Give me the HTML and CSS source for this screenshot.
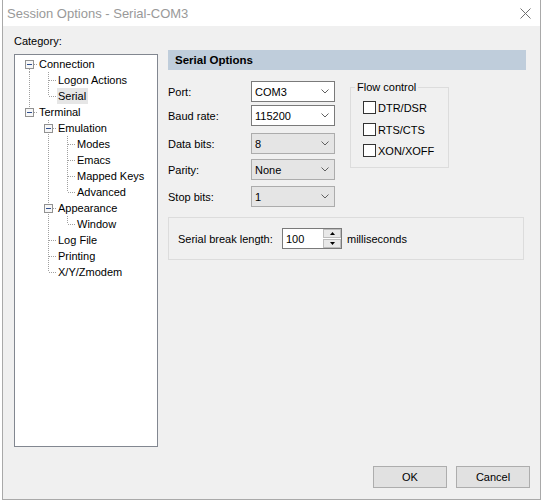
FILE: index.html
```html
<!DOCTYPE html>
<html>
<head>
<meta charset="utf-8">
<title>Session Options - Serial-COM3</title>
<link rel="stylesheet" href="styles.css">
</head>
<body>
<div class="window">
  <div class="titlebar">
    <span class="title">Session Options - Serial-COM3</span>
    <svg class="close" width="11" height="11" viewBox="0 0 11 11"><path d="M0.5 0.5L10.5 10.5M10.5 0.5L0.5 10.5" stroke="#707070" stroke-width="1" fill="none"/></svg>
  </div>
  <div class="main">
    <div class="panes">
      <div class="left">
        <div class="cat-label">Category:</div>
        <div class="tree">
          <div class="row"><svg width="18" height="16"><path d="M9.5 13V16" stroke="#a0a0a0" stroke-dasharray="1 1"/><path d="M14 8.5H18" stroke="#a0a0a0" stroke-dasharray="1 1"/><rect x="5.5" y="4.5" width="8" height="8" fill="#f7f7f7" stroke="#919191"/><path d="M7 8.5H12" stroke="#2f4f8f"/></svg><span>Connection</span></div>
          <div class="row"><svg width="37" height="16"><path d="M9.5 0V16M28.5 0V16" stroke="#a0a0a0" stroke-dasharray="1 1"/><path d="M29 8.5H37" stroke="#a0a0a0" stroke-dasharray="1 1"/></svg><span>Logon Actions</span></div>
          <div class="row"><svg width="37" height="16"><path d="M9.5 0V16M28.5 0V8" stroke="#a0a0a0" stroke-dasharray="1 1"/><path d="M29 8.5H37" stroke="#a0a0a0" stroke-dasharray="1 1"/></svg><span class="sel">Serial</span></div>
          <div class="row"><svg width="18" height="16"><path d="M9.5 0V4" stroke="#a0a0a0" stroke-dasharray="1 1"/><path d="M14 8.5H18" stroke="#a0a0a0" stroke-dasharray="1 1"/><rect x="5.5" y="4.5" width="8" height="8" fill="#f7f7f7" stroke="#919191"/><path d="M7 8.5H12" stroke="#2f4f8f"/></svg><span>Terminal</span></div>
          <div class="row"><svg width="37" height="16"><path d="M28.5 0V16" stroke="#a0a0a0" stroke-dasharray="1 1"/><path d="M33 8.5H37" stroke="#a0a0a0" stroke-dasharray="1 1"/><rect x="24.5" y="4.5" width="8" height="8" fill="#f7f7f7" stroke="#919191"/><path d="M26 8.5H31" stroke="#2f4f8f"/></svg><span>Emulation</span></div>
          <div class="row"><svg width="56" height="16"><path d="M28.5 0V16M47.5 0V16" stroke="#a0a0a0" stroke-dasharray="1 1"/><path d="M48 8.5H56" stroke="#a0a0a0" stroke-dasharray="1 1"/></svg><span>Modes</span></div>
          <div class="row"><svg width="56" height="16"><path d="M28.5 0V16M47.5 0V16" stroke="#a0a0a0" stroke-dasharray="1 1"/><path d="M48 8.5H56" stroke="#a0a0a0" stroke-dasharray="1 1"/></svg><span>Emacs</span></div>
          <div class="row"><svg width="56" height="16"><path d="M28.5 0V16M47.5 0V16" stroke="#a0a0a0" stroke-dasharray="1 1"/><path d="M48 8.5H56" stroke="#a0a0a0" stroke-dasharray="1 1"/></svg><span>Mapped Keys</span></div>
          <div class="row"><svg width="56" height="16"><path d="M28.5 0V16M47.5 0V8" stroke="#a0a0a0" stroke-dasharray="1 1"/><path d="M48 8.5H56" stroke="#a0a0a0" stroke-dasharray="1 1"/></svg><span>Advanced</span></div>
          <div class="row"><svg width="37" height="16"><path d="M28.5 0V16" stroke="#a0a0a0" stroke-dasharray="1 1"/><path d="M33 8.5H37" stroke="#a0a0a0" stroke-dasharray="1 1"/><rect x="24.5" y="4.5" width="8" height="8" fill="#f7f7f7" stroke="#919191"/><path d="M26 8.5H31" stroke="#2f4f8f"/></svg><span>Appearance</span></div>
          <div class="row"><svg width="56" height="16"><path d="M28.5 0V16M47.5 0V8" stroke="#a0a0a0" stroke-dasharray="1 1"/><path d="M48 8.5H56" stroke="#a0a0a0" stroke-dasharray="1 1"/></svg><span>Window</span></div>
          <div class="row"><svg width="37" height="16"><path d="M28.5 0V16" stroke="#a0a0a0" stroke-dasharray="1 1"/><path d="M29 8.5H37" stroke="#a0a0a0" stroke-dasharray="1 1"/></svg><span>Log File</span></div>
          <div class="row"><svg width="37" height="16"><path d="M28.5 0V16" stroke="#a0a0a0" stroke-dasharray="1 1"/><path d="M29 8.5H37" stroke="#a0a0a0" stroke-dasharray="1 1"/></svg><span>Printing</span></div>
          <div class="row"><svg width="37" height="16"><path d="M28.5 0V8" stroke="#a0a0a0" stroke-dasharray="1 1"/><path d="M29 8.5H37" stroke="#a0a0a0" stroke-dasharray="1 1"/></svg><span>X/Y/Zmodem</span></div>
        </div>
      </div>
      <div class="right">
        <div class="header">Serial Options</div>
        <div class="settings">
          <div class="form">
            <div class="frow"><label>Port:</label><div class="combo"><span>COM3</span><svg width="8" height="5" viewBox="0 0 8 5"><path d="M0.5 0.5L4 4L7.5 0.5" stroke="#606060" fill="none"/></svg></div></div>
            <div class="frow g3"><label>Baud rate:</label><div class="combo"><span>115200</span><svg width="8" height="5" viewBox="0 0 8 5"><path d="M0.5 0.5L4 4L7.5 0.5" stroke="#606060" fill="none"/></svg></div></div>
            <div class="frow g7"><label>Data bits:</label><div class="combo list"><span>8</span><svg width="8" height="5" viewBox="0 0 8 5"><path d="M0.5 0.5L4 4L7.5 0.5" stroke="#606060" fill="none"/></svg></div></div>
            <div class="frow g5"><label>Parity:</label><div class="combo list"><span>None</span><svg width="8" height="5" viewBox="0 0 8 5"><path d="M0.5 0.5L4 4L7.5 0.5" stroke="#606060" fill="none"/></svg></div></div>
            <div class="frow g6"><label>Stop bits:</label><div class="combo list"><span>1</span><svg width="8" height="5" viewBox="0 0 8 5"><path d="M0.5 0.5L4 4L7.5 0.5" stroke="#606060" fill="none"/></svg></div></div>
          </div>
          <fieldset class="flow">
            <legend>Flow control</legend>
            <div class="chk"><span class="box"></span><span>DTR/DSR</span></div>
            <div class="chk c2"><span class="box"></span><span>RTS/CTS</span></div>
            <div class="chk c3"><span class="box"></span><span>XON/XOFF</span></div>
          </fieldset>
        </div>
        <div class="break">
          <label class="break-label">Serial break length:</label>
          <div class="spin">
            <span class="spin-val">100</span>
            <div class="spin-btns">
              <div class="sbtn"><svg width="5" height="3" viewBox="0 0 5 3"><path d="M2.5 0L5 3H0Z" fill="#000"/></svg></div>
              <div class="sbtn"><svg width="5" height="3" viewBox="0 0 5 3"><path d="M0 0H5L2.5 3Z" fill="#000"/></svg></div>
            </div>
          </div>
          <span class="unit">milliseconds</span>
        </div>
      </div>
    </div>
    <div class="buttons">
      <button class="btn">OK</button>
      <button class="btn">Cancel</button>
    </div>
  </div>
</div>
</body>
</html>
```
FILE: styles.css
```css
* { box-sizing: border-box; }
html, body { margin: 0; padding: 0; }
body {
  background: #fff;
  font-family: "Liberation Sans", Arial, sans-serif;
  font-size: 11px;
  color: #000;
  width: 543px;
  height: 502px;
  overflow: hidden;
}
.window {
  margin-left: 2px;
  width: 539px;
  height: 500px;
  border: 1px solid #a9a9a9;
  border-top: none;
  background: #f0f0f0;
  display: flex;
  flex-direction: column;
}
.titlebar {
  height: 26px;
  flex: none;
  background: #fff;
  display: flex;
  align-items: center;
  justify-content: space-between;
  padding: 0 9px 0 4px;
}
.title {
  font-size: 13px;
  color: #999;
}
.close { display: block; }
.main {
  flex: 1;
  display: flex;
  flex-direction: column;
}
.panes { flex: 1; display: flex; }
.left { padding: 8px 0 0 11px; width: 155px; flex: none; }
.cat-label { height: 14px; line-height: 14px; margin-bottom: 6px; }
.tree {
  width: 144px;
  height: 393px;
  border: 1px solid #828790;
  background: #fff;
  padding: 1px 0 0 5px;
}
.row { display: flex; height: 16px; white-space: nowrap; }
.row svg { display: block; flex: none; shape-rendering: crispEdges; }
.row span { line-height: 16px; height: 16px; padding: 0 2px 0 1px; }
.row .sel { background: #e6e6e6; }

.right { margin-left: 10px; padding-top: 24px; width: 358px; flex: none; }
.header {
  height: 20px;
  line-height: 20px;
  background: #bfcddb;
  font-weight: bold;
  font-size: 11.5px;
  padding-left: 7px;
}
.settings { display: flex; align-items: flex-start; margin-top: 10px; }
.form { padding-top: 1px; }
.frow { display: flex; align-items: center; height: 21px; }
.frow.g3 { margin-top: 3px; }
.frow.g7 { margin-top: 7px; }
.frow.g5 { margin-top: 5px; }
.frow.g6 { margin-top: 6px; }
.frow label { width: 83px; }
.combo {
  width: 84px;
  height: 21px;
  border: 1px solid #7a7a7a;
  background: #fff;
  display: flex;
  align-items: center;
  justify-content: space-between;
  padding: 0 5px 0 3px;
}
.combo svg { display: block; }
.combo.list { background: #e5e5e5; border-color: #acacac; }

.flow {
  margin: 0 0 0 15px;
  width: 99px;
  border: 1px solid #dcdcdc;
  padding: 7px 0 10px 4px;
  min-width: 0;
}
.flow legend { padding: 0 2px; line-height: 14px; height: 14px; }
.chk { display: flex; align-items: center; height: 13px; padding-left: 8px; gap: 2px; }
.chk.c2 { margin-top: 9px; }
.chk.c3 { margin-top: 8px; }
.box { width: 13px; height: 13px; border: 1px solid #333; background: #fff; flex: none; }

.break {
  margin-top: 10px;
  width: 356px;
  height: 43px;
  border: 1px solid #dcdcdc;
  display: flex;
  align-items: center;
  padding-left: 9px;
}
.break-label { width: 104px; }
.spin {
  width: 60px;
  height: 21px;
  border: 1px solid #7a7a7a;
  background: #fff;
  display: flex;
  align-items: center;
  padding-left: 3px;
}
.spin-btns {
  margin-left: auto;
  width: 18px;
  height: 19px;
  display: flex;
  flex-direction: column;
  gap: 1px;
}
.sbtn {
  flex: 1;
  background: #e8e8e8;
  border: 1px solid #bdbdbd;
  display: flex;
  align-items: center;
  justify-content: center;
}
.sbtn svg { display: block; }
.unit { margin-left: 5px; }

.buttons {
  display: flex;
  justify-content: flex-end;
  gap: 9px;
  padding: 0 10px 11px 0;
}
.btn {
  width: 74px;
  height: 22px;
  border: 1px solid #adadad;
  background: #e1e1e1;
  font-family: inherit;
  font-size: 11px;
  color: #000;
  padding: 0;
  margin: 0;
}
```
